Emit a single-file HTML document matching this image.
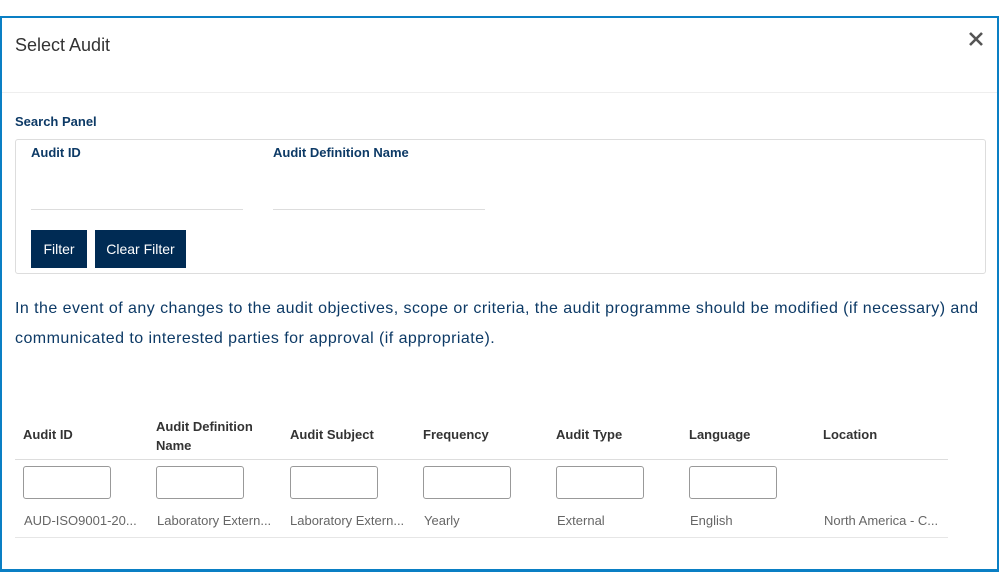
<!DOCTYPE html>
<html><head><style>
*{margin:0;padding:0;box-sizing:border-box}
body{width:1000px;height:572px;background:#fff;font-family:"Liberation Sans",sans-serif;position:relative;overflow:hidden}
.a{position:absolute;white-space:nowrap}
.frame{position:absolute;left:0;top:16px;width:999px;height:556px;border:2px solid #0a7fc4;border-bottom-width:3px}
.lbl{font-size:13px;font-weight:bold;color:#0d3a66}
.th{font-size:13px;font-weight:bold;color:#333}
.td{font-size:13px;color:#666}
.inp{position:absolute;top:466px;width:88px;height:33px;border:1px solid #999;border-radius:3px}
.btn{position:absolute;top:230px;height:38px;background:#002b54;color:#fff;font-size:14px;line-height:38px;text-align:center}
</style></head><body>
<div class="frame"></div>
<div class="a" style="left:15px;top:35px;font-size:18px;color:#333">Select Audit</div>
<svg class="a" style="left:968px;top:31px" width="16" height="16"><path d="M2 2L14 14M14 2L2 14" stroke="#555" stroke-width="2.6"/></svg>
<div class="a" style="left:2px;top:92px;width:995px;height:1px;background:#eee"></div>
<div class="a lbl" style="left:15px;top:114px">Search Panel</div>
<div class="a" style="left:15px;top:139px;width:971px;height:135px;border:1px solid #ddd;border-radius:3px"></div>
<div class="a lbl" style="left:31px;top:145px">Audit ID</div>
<div class="a lbl" style="left:273px;top:145px">Audit Definition Name</div>
<div class="a" style="left:31px;top:209px;width:212px;height:1px;background:#ddd"></div>
<div class="a" style="left:273px;top:209px;width:212px;height:1px;background:#ddd"></div>
<div class="btn" style="left:31px;width:56px">Filter</div>
<div class="btn" style="left:95px;width:91px">Clear Filter</div>
<div class="a" style="left:15px;top:294px;font-size:16px;letter-spacing:0.45px;color:#0d3a66;line-height:30px;white-space:normal;width:980px">In the event of any changes to the audit objectives, scope or criteria, the audit programme should be modified (if necessary) and communicated to interested parties for approval (if appropriate).</div>
<div class="a th" style="left:23px;top:427px">Audit ID</div>
<div class="a th" style="left:156px;top:417px;line-height:19px">Audit Definition<br>Name</div>
<div class="a th" style="left:290px;top:427px">Audit Subject</div>
<div class="a th" style="left:423px;top:427px">Frequency</div>
<div class="a th" style="left:556px;top:427px">Audit Type</div>
<div class="a th" style="left:689px;top:427px">Language</div>
<div class="a th" style="left:823px;top:427px">Location</div>
<div class="a" style="left:15px;top:459px;width:933px;height:1px;background:#ddd"></div>
<div class="inp" style="left:23px"></div>
<div class="inp" style="left:156px"></div>
<div class="inp" style="left:290px"></div>
<div class="inp" style="left:423px"></div>
<div class="inp" style="left:556px"></div>
<div class="inp" style="left:689px"></div>
<div class="a td" style="left:24px;top:513px">AUD-ISO9001-20...</div>
<div class="a td" style="left:157px;top:513px">Laboratory Extern...</div>
<div class="a td" style="left:290px;top:513px">Laboratory Extern...</div>
<div class="a td" style="left:424px;top:513px">Yearly</div>
<div class="a td" style="left:557px;top:513px">External</div>
<div class="a td" style="left:690px;top:513px">English</div>
<div class="a td" style="left:824px;top:513px">North America - C...</div>
<div class="a" style="left:15px;top:537px;width:933px;height:1px;background:#e6e6e6"></div>
</body></html>
